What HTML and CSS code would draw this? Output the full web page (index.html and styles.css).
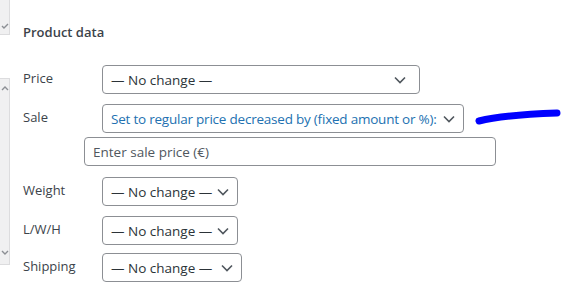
FILE: index.html
```html
<!DOCTYPE html>
<html lang="en">
<head>
    <meta charset="UTF-8">
    <title>Bulk edit - Product data</title>
    <link rel="stylesheet" href="styles.css">
</head>
<body>
    <div class="page">
        <div class="side">
            <div class="side-box top">
                <svg class="tick" width="8" height="6" viewBox="0 0 8 6"><path d="M1 3l2 2 4-4" fill="none" stroke="#8c8f94" stroke-width="1.4"/></svg>
            </div>
            <div class="side-box list">
                <svg width="8" height="6" viewBox="0 0 8 6"><path d="M1 5l3-3 3 3" fill="none" stroke="#8c8f94" stroke-width="1.4"/></svg>
                <svg width="8" height="6" viewBox="0 0 8 6"><path d="M1 1l3 3 3-3" fill="none" stroke="#8c8f94" stroke-width="1.4"/></svg>
            </div>
        </div>

        <div class="content">
            <h4 class="title">Product data</h4>

            <div class="field price">
                <span class="label">Price</span>
                <div class="select wide">
                    <span>— No change —</span>
                    <svg class="chev" width="12" height="8" viewBox="0 0 12 8"><path d="M1 1.5l5 5 5-5" fill="none" stroke="#50575e" stroke-width="1.6"/></svg>
                </div>
            </div>

            <div class="field sale">
                <span class="label">Sale</span>
                <div class="select active">
                    <span>Set to regular price decreased by (fixed amount or %):</span>
                    <svg class="chev" width="12" height="8" viewBox="0 0 12 8"><path d="M1 1.5l5 5 5-5" fill="none" stroke="#50575e" stroke-width="1.6"/></svg>
                </div>
                <svg class="scribble" width="90" height="20" viewBox="0 0 90 20"><path d="M5 15C25 10 55 8 83 7" fill="none" stroke="#0000ff" stroke-width="7" stroke-linecap="round"/></svg>
            </div>

            <div class="input">Enter sale price (€)</div>

            <div class="field weight">
                <span class="label">Weight</span>
                <div class="select small">
                    <span>— No change —</span>
                    <svg class="chev" width="12" height="8" viewBox="0 0 12 8"><path d="M1 1.5l5 5 5-5" fill="none" stroke="#50575e" stroke-width="1.6"/></svg>
                </div>
            </div>

            <div class="field dims">
                <span class="label">L/W/H</span>
                <div class="select small">
                    <span>— No change —</span>
                    <svg class="chev" width="12" height="8" viewBox="0 0 12 8"><path d="M1 1.5l5 5 5-5" fill="none" stroke="#50575e" stroke-width="1.6"/></svg>
                </div>
            </div>

            <div class="field shipping">
                <span class="label">Shipping</span>
                <div class="select ship">
                    <span>— No change —</span>
                    <svg class="chev" width="12" height="8" viewBox="0 0 12 8"><path d="M1 1.5l5 5 5-5" fill="none" stroke="#50575e" stroke-width="1.6"/></svg>
                </div>
            </div>
        </div>
    </div>
</body>
</html>
```

FILE: styles.css
```css
body {
    margin: 0;
    background-color: #fff;
    color: #3c434a;
    font-family: "Open Sans", "Noto Sans", sans-serif;
    font-size: 13px;
}
.page {
    display: flex;
    height: 292px;
    overflow: hidden;
}
.side {
    width: 10px;
    flex-shrink: 0;
}
.side-box {
    background-color: #f0f0f1;
    border-right: 1px solid #dcdcde;
    border-bottom: 1px solid #dcdcde;
    box-sizing: border-box;
}
.side-box.top {
    height: 35px;
    display: flex;
    align-items: flex-end;
    padding-bottom: 5px;
}
.side-box.list {
    margin-top: 43px;
    height: 187px;
    border-top: 1px solid #dcdcde;
    display: flex;
    flex-direction: column;
    justify-content: space-between;
    padding: 6px 0 8px;
}
.side-box svg {
    margin-left: 1px;
}
.content {
    position: relative;
    padding-left: 13px;
    flex: 1;
}
.title {
    margin: 22px 0 0;
    font-size: 13px;
    font-weight: 600;
    line-height: 20px;
}
.field {
    display: flex;
    align-items: center;
    position: relative;
}
.label {
    width: 79px;
    flex-shrink: 0;
    margin-top: -4px;
}
.select, .input {
    height: 29px;
    box-sizing: border-box;
    border: 1px solid #8c8f94;
    border-radius: 4px;
    display: flex;
    align-items: center;
    padding: 0 13px 0 8px;
    font-size: 13.5px;
    color: #2c3338;
}
.select span {
    flex: 1;
    white-space: nowrap;
}
.chev {
    flex-shrink: 0;
}
.select.wide {
    width: 318px;
}
.select.active {
    width: 362px;
    color: #2271b1;
    padding-right: 8px;
}
.select.active span {
    letter-spacing: -0.22px;
}
.select.small {
    width: 136px;
    padding-right: 8px;
}
.select.ship {
    width: 140px;
    padding-right: 8px;
}
.price {
    margin-top: 23px;
}
.sale {
    margin-top: 10px;
}
.input {
    margin: 4px 0 0 61px;
    width: 412px;
    color: #50575e;
}
.weight {
    margin-top: 11px;
}
.dims {
    margin-top: 10px;
}
.shipping {
    margin-top: 8px;
}
.scribble {
    position: absolute;
    left: 451px;
    top: 2px;
}
```
